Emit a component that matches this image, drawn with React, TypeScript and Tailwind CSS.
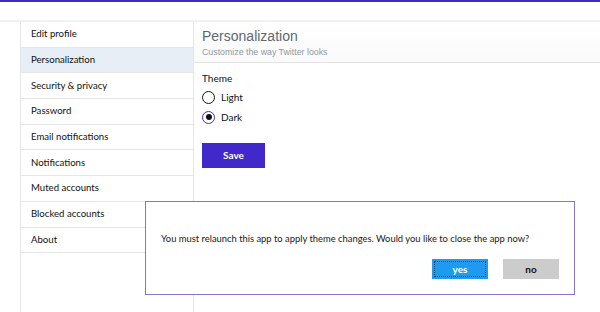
import { useState } from "react"

const menu = [
  "Edit profile",
  "Personalization",
  "Security & privacy",
  "Password",
  "Email notifications",
  "Notifications",
  "Muted accounts",
  "Blocked accounts",
  "About",
]

function Radio({ label, checked, onClick }: { label: string; checked: boolean; onClick: () => void }) {
  return (
    <div className="flex items-center h-[20px] cursor-pointer" onClick={onClick}>
      {checked ? (
        <div className="w-[13px] h-[13px] rounded-full border-[1.5px] border-[#3f2bc8] flex items-center justify-center">
          <div className="w-[6px] h-[6px] rounded-full bg-[#111]"></div>
        </div>
      ) : (
        <div className="w-[13px] h-[13px] rounded-full border-[1.5px] border-[#111]"></div>
      )}
      <span className="ml-[6px] text-[10px] text-[#111]">{label}</span>
    </div>
  )
}

export default function App() {
  const [theme, setTheme] = useState("dark")

  return (
    <div className="relative w-[600px] h-[312px] bg-white overflow-hidden font-['Lato',sans-serif]">
      <div className="h-[2px] bg-[#3f2bc8]"></div>
      <div className="mt-[18px] flex h-[292px] border-t-2 border-[#f1f1f1]">
        {/* 메뉴 */}
        <div className="ml-[20px] w-[174px] border-l border-r border-[#e6e6e6]">
          {menu.map((name) => (
            <div
              key={name}
              className={`h-[25.7px] pl-[10px] flex items-center border-b border-[#e6e6e6] text-[9.6px] text-[#111] ${
                name === "Personalization" ? "bg-[#e8eef5]" : ""
              }`}
            >
              {name}
            </div>
          ))}
        </div>

        <div className="flex-1">
          <div className="h-[41px] pl-[8px] pt-[5px] border-b border-[#e4e4e4] bg-gradient-to-b from-white to-[#fafafa] font-['Liberation_Sans',sans-serif]">
            <div className="text-[14px] leading-[19px] text-[#5d6873]">Personalization</div>
            <div className="text-[8.8px] leading-[13px] text-[#8e99a4]">Customize the way Twitter looks</div>
          </div>
          <div className="pl-[8px] pt-[7px]">
            <div className="text-[10px] text-[#111] h-[16px] leading-[16px]">Theme</div>
            <div className="mt-[1px]">
              <Radio label="Light" checked={theme === "light"} onClick={() => setTheme("light")} />
              <Radio label="Dark" checked={theme === "dark"} onClick={() => setTheme("dark")} />
            </div>
            <button className="mt-[16px] w-[63px] h-[25px] bg-[#4128c8] text-white text-[10px] font-bold">
              Save
            </button>
          </div>
        </div>
      </div>

      {/* 재시작 안내 */}
      <div className="absolute left-[145px] top-[201px] w-[430px] h-[94px] bg-white border border-[#8a74c6] flex flex-col">
        <div className="pl-[15px] pt-[30px] text-[9.4px] leading-[14px] text-[#1a1a1a] whitespace-nowrap">
          You must relaunch this app to apply theme changes. Would you like to close the app now?
        </div>
        <div className="flex justify-end gap-[15px] pr-[15px] mt-[13px]">
          <button className="relative w-[56px] h-[20px] bg-[#1d9bf0] text-white text-[10px] font-bold">
            <span className="absolute inset-[2px] border border-dotted border-[#14406e]"></span>
            yes
          </button>
          <button className="w-[56px] h-[20px] bg-[#cccccc] text-[#111] text-[10px] font-bold">
            no
          </button>
        </div>
      </div>
    </div>
  )
}
